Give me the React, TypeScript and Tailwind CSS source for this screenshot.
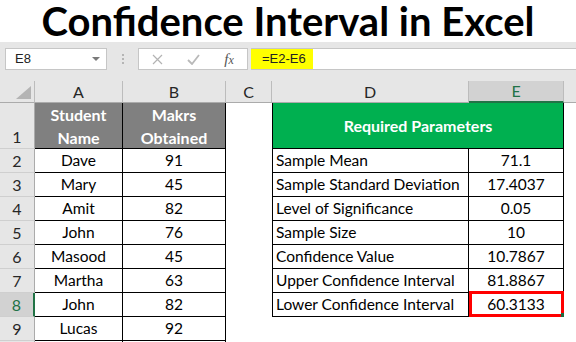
import React from "react";

const rows: { n: number; name: string; mark: string; d?: string; e?: string }[] = [
  { n: 2, name: "Dave", mark: "91", d: "Sample Mean", e: "71.1" },
  { n: 3, name: "Mary", mark: "45", d: "Sample Standard Deviation", e: "17.4037" },
  { n: 4, name: "Amit", mark: "82", d: "Level of Significance", e: "0.05" },
  { n: 5, name: "John", mark: "76", d: "Sample Size", e: "10" },
  { n: 6, name: "Masood", mark: "45", d: "Confidence Value", e: "10.7867" },
  { n: 7, name: "Martha", mark: "63", d: "Upper Confidence Interval", e: "81.8867" },
  { n: 8, name: "John", mark: "82", d: "Lower Confidence Interval", e: "60.3133" },
  { n: 9, name: "Lucas", mark: "92" },
];

function ColHead({ w, label, sel }: { w: string; label: string; sel?: boolean }) {
  return (
    <div
      className={`${w} h-full flex items-center justify-center border-r border-[#bcbcbc] text-[16px] ${
        sel ? "bg-[#d2d2d2] text-[#217346] border-b-2 border-b-[#217346]" : "text-[#262626] border-b border-b-[#ababab]"
      }`}
    >
      {label}
    </div>
  );
}

export default function App() {
  return (
    <div className="w-[576px] h-[342px] overflow-hidden bg-white text-black font-['Lato','Liberation_Sans',sans-serif]">
      {/* Title */}
      <div className="h-[42px] text-center text-[40px] font-bold leading-[42px] whitespace-nowrap">
        Confidence Interval in Excel
      </div>

      {/* Formula bar + column headers */}
      <div className="bg-[#e6e6e6] h-[61px] flex flex-col">
        <div className="mt-[6px] h-[22px] flex items-stretch">
          <div className="ml-[5px] w-[102px] bg-white border border-[#c6c6c6] flex items-center justify-between pl-[9px] pr-[6px] text-[13px] text-[#222] font-['Liberation_Sans',sans-serif]">
            <span>E8</span>
            <span className="w-0 h-0 border-l-[4px] border-r-[4px] border-t-[4px] border-l-transparent border-r-transparent border-t-[#7a7a7a]" />
          </div>
          <div className="w-[31px] flex flex-col items-center justify-center gap-[2px]">
            <span className="w-[2px] h-[2px] bg-[#b5b5b5]" />
            <span className="w-[2px] h-[2px] bg-[#b5b5b5]" />
            <span className="w-[2px] h-[2px] bg-[#b5b5b5]" />
          </div>
          <div className="w-[110px] bg-white border border-[#c6c6c6] grid grid-cols-3 items-center">
            <div className="flex justify-center">
              <svg width="11" height="11" viewBox="0 0 11 11">
                <path d="M1 1 L10 10 M10 1 L1 10" stroke="#b3b3b3" strokeWidth="1.2" fill="none" />
              </svg>
            </div>
            <div className="flex justify-center">
              <svg width="13" height="11" viewBox="0 0 13 11">
                <path d="M1 6 L5 10 L12 1" stroke="#b9b9b9" strokeWidth="1.8" fill="none" />
              </svg>
            </div>
            <div className="flex justify-center">
              <span className="italic text-[#555] font-['Liberation_Serif',serif] text-[15px] leading-none">
                f<span className="text-[12px]">x</span>
              </span>
            </div>
          </div>
          <div className="ml-[3px] flex-1 bg-white border-y border-[#c6c6c6] flex items-stretch">
            <div className="bg-[#ffff00] w-[62px] flex items-center pl-[11px] text-[13px] text-[#222] font-['Liberation_Sans',sans-serif]">
              =E2-E6
            </div>
          </div>
        </div>
        <div className="mt-[11px] h-[22px] flex">
          <div className="w-[35px] h-full relative border-r border-[#bcbcbc] border-b border-b-[#ababab]">
            <svg className="absolute right-[3px] bottom-[3px]" width="15" height="13" viewBox="0 0 15 13">
              <path d="M15 0 L15 13 L0 13 Z" fill="#b4b4b4" />
            </svg>
          </div>
          <ColHead w="w-[88px]" label="A" />
          <ColHead w="w-[103px]" label="B" />
          <ColHead w="w-[46px]" label="C" />
          <ColHead w="w-[197px]" label="D" />
          <ColHead w="w-[95px]" label="E" sel />
          <div className="flex-1 h-full border-b border-b-[#ababab]" />
        </div>
      </div>

      {/* Row 1 */}
      <div className="h-[46px] flex text-[16px]">
        <div className="w-[35px] bg-[#e6e6e6] border-r border-[#ababab] border-b border-b-[#cfcfcf] flex items-end justify-center leading-[23px] text-[16px] text-[#262626]">
          1
        </div>
        <div className="w-[88px] bg-[#808080] border-r border-b border-black flex flex-col items-center justify-center text-white font-bold leading-[23px]">
          <span>Student</span>
          <span>Name</span>
        </div>
        <div className="w-[103px] bg-[#808080] border-r border-b border-black flex flex-col items-center justify-center text-white font-bold leading-[23px]">
          <span>Makrs</span>
          <span>Obtained</span>
        </div>
        <div className="w-[46px]" />
        <div className="w-[292px] bg-[#00b050] border-x border-b border-black flex items-center justify-center text-white font-bold">
          Required Parameters
        </div>
      </div>

      {/* Rows 2..9 */}
      {rows.map((r) => {
        const sel = r.n === 8;
        const hasD = r.d !== undefined;
        return (
          <div key={r.n} className="h-[24px] flex text-[15.5px]">
            <div
              className={`w-[35px] flex items-center justify-center text-[16px] border-b border-b-[#cfcfcf] ${
                sel
                  ? "bg-[#d2d2d2] text-[#217346] border-r-2 border-r-[#217346]"
                  : "bg-[#e6e6e6] text-[#262626] border-r border-r-[#ababab]"
              }`}
            >
              {r.n}
            </div>
            <div className="w-[88px] border-r border-b border-black flex items-center justify-center">{r.name}</div>
            <div className="w-[103px] border-r border-b border-black flex items-center justify-center">{r.mark}</div>
            <div className="w-[46px]" />
            {hasD ? (
              <>
                <div className="w-[197px] border-x border-b border-black flex items-center pl-[3px] whitespace-nowrap">
                  {r.d}
                </div>
                <div className="w-[95px] border-r border-b border-black flex items-center justify-center relative">
                  {r.e}
                  {sel && (
                    <>
                      <div className="absolute -top-[2px] left-0 -right-[1px] -bottom-[1px] border-[3px] border-[#ff0000]" />
                      <div className="absolute -right-[1px] -bottom-[1px] w-[3px] h-[4px] bg-[#1e6b41]" />
                    </>
                  )}
                </div>
              </>
            ) : null}
          </div>
        );
      })}

      {/* Row 10 sliver */}
      <div className="h-[10px] flex">
        <div className="w-[35px] bg-[#e6e6e6] border-r border-[#ababab]" />
        <div className="w-[88px] border-r border-black" />
        <div className="w-[103px] border-r border-black" />
      </div>
    </div>
  );
}
